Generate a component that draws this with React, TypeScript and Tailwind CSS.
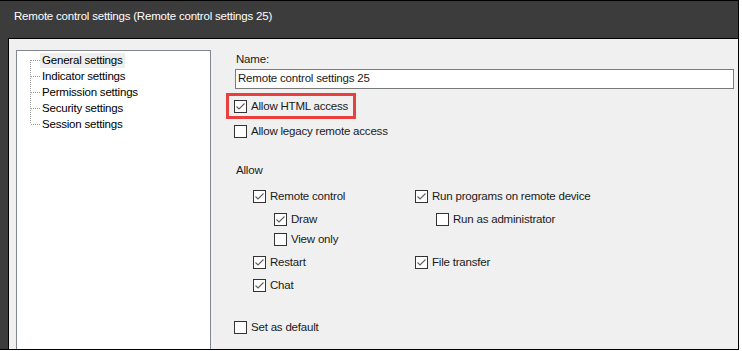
import React from "react";

const font = { fontFamily: '"Liberation Sans", Arial, sans-serif' };

function Check({ checked }: { checked?: boolean }) {
  return (
    <span className="flex h-[13px] w-[13px] shrink-0 items-center justify-center border border-[#333333] bg-white">
      {checked && (
        <svg width="11" height="11" viewBox="0 0 11 11">
          <polyline points="1.5,5.5 4,8 9.5,2.5" fill="none" stroke="#5e5e5e" strokeWidth="1.1" />
        </svg>
      )}
    </span>
  );
}

function Row({ checked, label, className = "" }: { checked?: boolean; label: string; className?: string }) {
  return (
    <div className={`flex h-[16px] items-center ${className}`}>
      <Check checked={checked} />
      <span className="ml-[4px] whitespace-nowrap text-[11.5px] leading-[16px] tracking-[-0.2px] text-[#1a1a1a]">
        {label}
      </span>
    </div>
  );
}

export default function App() {
  const items = ["General settings", "Indicator settings", "Permission settings", "Security settings", "Session settings"];
  return (
    <div className="h-[351px] w-[742px] bg-white" style={font}>
      <div className="flex h-[350px] w-[739px] flex-col border-t border-r border-b border-black bg-[#3c3c3c]">
        <div className="h-[37px] shrink-0 pl-[14px] pt-[7px] text-[11.5px] leading-[16px] tracking-[-0.2px] text-white">
          Remote control settings (Remote control settings 25)
        </div>
        <div className="flex min-h-0 flex-1 pl-[8px]">
          <div className="flex min-h-0 flex-1 overflow-hidden border-t border-l border-black bg-[#f0f0f0] pl-[7px] pt-[10px]">
            {/* tree */}
            <div className="mt-px h-[320px] w-[195px] shrink-0 border border-[#828790] bg-white pt-px">
              <div className="ml-[12px] flex">
                <svg width="11" height="80" viewBox="0 0 11 80" className="shrink-0">
                  <g stroke="#a0a0a0" strokeWidth="1" strokeDasharray="1 1" fill="none">
                    <line x1="1.5" y1="8" x2="1.5" y2="72" />
                    <line x1="2" y1="8.5" x2="11" y2="8.5" />
                    <line x1="2" y1="24.5" x2="11" y2="24.5" />
                    <line x1="2" y1="40.5" x2="11" y2="40.5" />
                    <line x1="2" y1="56.5" x2="11" y2="56.5" />
                    <line x1="2" y1="72.5" x2="11" y2="72.5" />
                  </g>
                </svg>
                <div className="flex flex-col">
                  {items.map((it, i) => (
                    <div key={it} className="flex h-[16px] items-center">
                      <span
                        className={`px-[2px] text-[11.5px] leading-[15px] tracking-[-0.2px] text-black ${i === 0 ? "bg-[#eeeeee]" : ""}`}
                      >
                        {it}
                      </span>
                    </div>
                  ))}
                </div>
              </div>
            </div>
            {/* right column */}
            <div className="ml-[23px] mt-[2px] flex flex-1 flex-col pr-[4px]">
              <div className="ml-[2px] h-[16px] text-[11.5px] leading-[16px] tracking-[-0.2px] text-[#1a1a1a]">Name:</div>
              <div className="ml-px mt-[2px] flex h-[20px] items-center border border-[#7a7a7a] bg-white pl-[2px] text-[11.5px] tracking-[-0.2px] text-[#1a1a1a]">
                Remote control settings 25
              </div>
              <div className="-ml-[8px] mt-[4px] flex h-[26px] w-[130px] items-center border-[3px] border-[#ea3f3f] pl-[5px]">
                <Row checked label="Allow HTML access" />
              </div>
              <Row label="Allow legacy remote access" className="mt-[4px]" />
              <div className="ml-[2px] mt-[23px] h-[16px] text-[11.5px] leading-[16px] tracking-[-0.2px] text-[#1a1a1a]">
                Allow
              </div>
              <div className="ml-[19px] flex flex-col">
                <div className="mt-[10px] flex">
                  <Row checked label="Remote control" className="w-[162px]" />
                  <Row checked label="Run programs on remote device" />
                </div>
                <div className="mt-[7px] flex">
                  <Row checked label="Draw" className="ml-[21px] w-[141px]" />
                  <Row label="Run as administrator" className="ml-[21px]" />
                </div>
                <Row label="View only" className="ml-[21px] mt-[4px]" />
                <div className="mt-[7px] flex">
                  <Row checked label="Restart" className="w-[162px]" />
                  <Row checked label="File transfer" />
                </div>
                <Row checked label="Chat" className="mt-[7px]" />
              </div>
              <Row label="Set as default" className="mt-[26px]" />
            </div>
          </div>
        </div>
      </div>
    </div>
  );
}
